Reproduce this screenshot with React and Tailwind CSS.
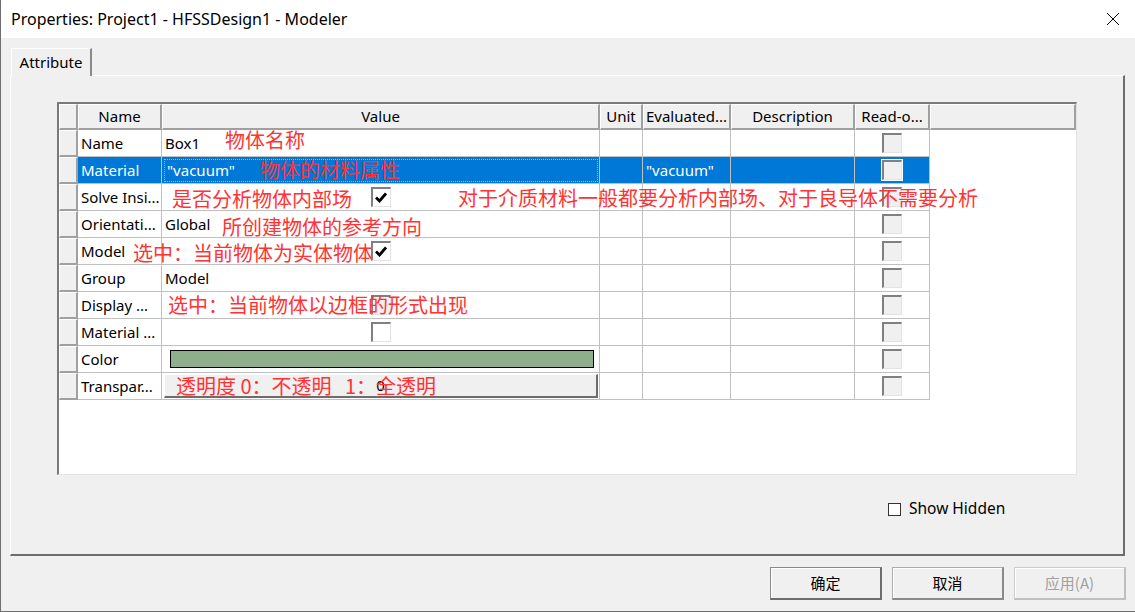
import React from "react";

const ui = "font-['Noto_Sans','Noto_Sans_CJK_SC',sans-serif]";
const cjk = "font-['Noto_Sans_CJK_SC','Noto_Sans',sans-serif]";

const columns = [
  { key: "name", label: "Name", w: "w-[84px]" },
  { key: "value", label: "Value", w: "w-[438px]" },
  { key: "unit", label: "Unit", w: "w-[43px]" },
  { key: "eval", label: "Evaluated...", w: "w-[88px]" },
  { key: "desc", label: "Description", w: "w-[124px]" },
  { key: "ro", label: "Read-o...", w: "w-[75px]" },
];

const rows = [
  { name: "Name", type: "text", value: "Box1" },
  { name: "Material", type: "edit", value: '"vacuum"', evaluated: '"vacuum"', selected: true },
  { name: "Solve Insi...", type: "check", checked: true },
  { name: "Orientati...", type: "text", value: "Global" },
  { name: "Model", type: "check", checked: true },
  { name: "Group", type: "text", value: "Model" },
  { name: "Display ...", type: "check", checked: false, grey: true },
  { name: "Material ...", type: "check", checked: false },
  { name: "Color", type: "color" },
  { name: "Transpar...", type: "button", value: "0" },
];

const notes = [
  { text: "物体名称", x: 224, y: 127 },
  { text: "物体的材料属性", x: 259, y: 157 },
  { text: "是否分析物体内部场", x: 171, y: 186 },
  { text: "对于介质材料一般都要分析内部场、对于良导体不需要分析", x: 457, y: 185 },
  { text: "所创建物体的参考方向", x: 221, y: 214 },
  { text: "选中：当前物体为实体物体", x: 132, y: 240 },
  { text: "选中：当前物体以边框的形式出现", x: 167, y: 292 },
  { text: "透明度 0：不透明   1：全透明", x: 175, y: 373 },
];

function Tick() {
  return (
    <svg width="12" height="11" viewBox="0 0 12 11">
      <path d="M1 5.5 L4.5 9 L11 1.5" fill="none" stroke="#000" strokeWidth="2.8" />
    </svg>
  );
}

function CheckBox({ checked, grey }) {
  return (
    <div
      className={
        "w-[20px] h-[20px] flex items-center justify-center border-t-2 border-l-2 border-t-[#808080] border-l-[#808080] border-b border-r border-b-[#e3e3e3] border-r-[#e3e3e3] " +
        (grey ? "bg-[#f0f0f0]" : "bg-white")
      }
    >
      {checked && <Tick />}
    </div>
  );
}

function ReadOnlyBox({ selected }) {
  return (
    <div
      className={
        "w-[20px] h-[20px] bg-[#f0f0f0] border-t-2 border-l-2 border-t-[#808080] border-l-[#808080] border-b border-r border-b-[#e3e3e3] border-r-[#e3e3e3] " +
        (selected ? "outline outline-1 outline-white" : "")
      }
    />
  );
}

function ValueCell({ row }) {
  if (row.type === "text")
    return <span className="pl-[3px]">{row.value}</span>;
  if (row.type === "edit")
    return (
      <div className="ml-[2px] w-[434px] h-[23px] border border-dotted border-[#f0b030] flex items-center pl-[2px]">
        {row.value}
      </div>
    );
  if (row.type === "check")
    return (
      <div className="w-full flex justify-center">
        <CheckBox checked={row.checked} grey={row.grey} />
      </div>
    );
  if (row.type === "color")
    return <div className="ml-[8px] w-[424px] h-[18px] bg-[#8fae8b] border border-black" />;
  return (
    <div className="ml-[2px] w-[434px] h-[24px] bg-[#f0f0f0] border-t border-l border-white border-r-2 border-b-2 border-r-[#6d6d6d] border-b-[#6d6d6d] flex items-center justify-center">
      {row.value}
    </div>
  );
}

const btn =
  "w-[112px] h-[33px] bg-[#f0f0f0] border-t border-l border-r-2 border-b-2 shadow-[inset_1px_1px_0_#ffffff] flex items-center justify-center";

export default function App() {
  return (
    <div className={"relative w-[1135px] h-[612px] bg-[#f0f0f0] border-l border-b border-[#6e6e6e] overflow-hidden text-[#000] " + ui}>
      {/* title bar */}
      <div className="h-[38px] bg-white flex items-center justify-between pl-[10px] pr-[15px]">
        <span className="text-[16px]">Properties: Project1 - HFSSDesign1 - Modeler</span>
        <svg width="14" height="14" viewBox="0 0 14 14">
          <path d="M1 1 L13 13 M13 1 L1 13" stroke="#000" strokeWidth="1" />
        </svg>
      </div>

      {/* tab */}
      <div className="mt-[10px] ml-[10px] flex">
        <div className="relative z-10 -mb-px h-[28px] w-[81px] bg-[#f0f0f0] border-t border-l border-white border-r-2 border-r-[#8a8a8a] flex items-center justify-center text-[15px]">
          Attribute
        </div>
      </div>

      {/* tab panel */}
      <div className="ml-[9px] w-[1115px] h-[481px] border-t border-l border-white border-r-2 border-b-2 border-r-[#6d6d6d] border-b-[#6d6d6d]">
        <div className="ml-[46px] mt-[26px] w-[1020px] h-[373px] bg-white border-t-2 border-l-2 border-t-[#7a7a7a] border-l-[#7a7a7a] border-b border-r border-b-[#e3e3e3] border-r-[#e3e3e3] text-[15px]">
          {/* header */}
          <div className="flex h-[26px]">
            <div className="w-[19px] bg-[#f0f0f0] border-t border-l border-white border-r-2 border-b-2 border-r-[#a0a0a0] border-b-[#a0a0a0]" />
            {columns.map((c) => (
              <div
                key={c.key}
                className={c.w + " bg-[#f0f0f0] border-t border-l border-white border-r-2 border-b-2 border-r-[#a0a0a0] border-b-[#a0a0a0] flex items-center justify-center whitespace-nowrap"}
              >
                {c.label}
              </div>
            ))}
            <div className="w-[146px] bg-[#f0f0f0] border-t border-l border-white border-r-2 border-b-2 border-r-[#a0a0a0] border-b-[#a0a0a0]" />
          </div>

          {rows.map((row) => {
            const cell =
              "h-full flex items-center border-r border-b border-[#c0c0c0] whitespace-nowrap overflow-hidden " +
              (row.selected ? "bg-[#0078d7] text-white" : "");
            return (
              <div key={row.name} className="flex h-[27px]">
                <div className="w-[19px] bg-[#f0f0f0] border-t border-l border-white border-r-2 border-b-2 border-r-[#a0a0a0] border-b-[#a0a0a0]" />
                <div className={"w-[84px] pl-[3px] " + cell}>{row.name}</div>
                <div className={"w-[438px] " + cell}>
                  <ValueCell row={row} />
                </div>
                <div className={"w-[43px] " + cell} />
                <div className={"w-[88px] pl-[3px] " + cell}>{row.evaluated}</div>
                <div className={"w-[124px] " + cell} />
                <div className={"w-[75px] justify-center " + cell}>
                  <ReadOnlyBox selected={row.selected} />
                </div>
              </div>
            );
          })}
        </div>

        <div className="mt-[25px] ml-[877px] flex items-center h-[18px] gap-[8px] text-[15.5px]">
          <div className="w-[13px] h-[13px] bg-white border border-[#333]" />
          <span>Show Hidden</span>
        </div>
      </div>

      {/* buttons */}
      <div className={"mt-[11px] flex justify-end gap-[10px] pr-[9px] text-[15px] " + cjk}>
        <button className={btn + " border-t-[#8a8a8a] border-l-[#8a8a8a] border-r-[#6d6d6d] border-b-[#6d6d6d]"}>
          确定
        </button>
        <button className={btn + " border-t-[#adadad] border-l-[#adadad] border-r-[#8a8a8a] border-b-[#8a8a8a]"}>
          取消
        </button>
        <button className={btn + " border-t-[#cccccc] border-l-[#cccccc] border-r-[#bfbfbf] border-b-[#bfbfbf] text-[#a0a0a0]"}>
          应用(A)
        </button>
      </div>

      {/* red annotations */}
      {notes.map((n) => (
        <div
          key={n.text}
          className={"absolute text-[20px] leading-[26px] text-[#ff3333] whitespace-pre " + cjk}
          style={{ left: n.x, top: n.y }}
        >
          {n.text}
        </div>
      ))}
    </div>
  );
}
